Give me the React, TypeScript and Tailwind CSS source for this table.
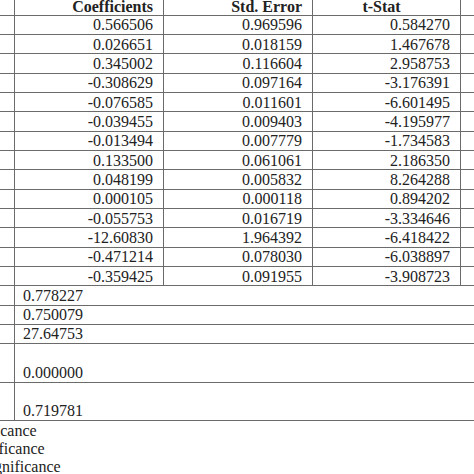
import React from 'react';

const rows = [
  ['0.566506', '0.969596', '0.584270'],
  ['0.026651', '0.018159', '1.467678'],
  ['0.345002', '0.116604', '2.958753'],
  ['-0.308629', '0.097164', '-3.176391'],
  ['-0.076585', '0.011601', '-6.601495'],
  ['-0.039455', '0.009403', '-4.195977'],
  ['-0.013494', '0.007779', '-1.734583'],
  ['0.133500', '0.061061', '2.186350'],
  ['0.048199', '0.005832', '8.264288'],
  ['0.000105', '0.000118', '0.894202'],
  ['-0.055753', '0.016719', '-3.334646'],
  ['-12.60830', '1.964392', '-6.418422'],
  ['-0.471214', '0.078030', '-6.038897'],
  ['-0.359425', '0.091955', '-3.908723'],
];

const stats = [
  { val: '0.778227', tall: false },
  { val: '0.750079', tall: false },
  { val: '27.64753', tall: false },
  { val: '0.000000', tall: true },
  { val: '0.719781', tall: true },
];

const txt = "font-['Liberation_Serif','Times_New_Roman',serif] text-[16px] leading-[17px] text-[#222]";
const cell = `border border-[#6b6b6b] p-0 ${txt}`;

export default function App() {
  return (
    <div className={`w-[474px] h-[474px] overflow-hidden bg-white ${txt}`}>
      <div className="w-[700px] -ml-[106px] -mt-[4.6px]">
        <table className={`table-fixed border-collapse w-[666px] ${txt}`}>
          <tbody>
            <tr className="h-[19.33px]">
              <td className={`${cell} w-[120px]`}></td>
              <td className={`${cell} w-[149px] font-bold text-right pr-[10px] pt-[1px]`}>Coefficients</td>
              <td className={`${cell} w-[149px] font-bold text-right pr-[10px] pt-[1px]`}>Std. Error</td>
              <td className={`${cell} w-[148px] font-bold text-center pr-[10px] pt-[1px]`}>t-Stat</td>
              <td className={`${cell} w-[100px]`}></td>
            </tr>
            {rows.map((r, i) => (
              <tr key={i} className="h-[19.33px]">
                <td className={cell}></td>
                {r.map((v, j) => (
                  <td key={j} className={`${cell} text-right pr-[10px]`}>{v}</td>
                ))}
                <td className={cell}></td>
              </tr>
            ))}
            {stats.map((s, i) => (
              <tr key={i} className={s.tall ? 'h-[38.5px]' : 'h-[19.33px]'}>
                <td className={cell}></td>
                <td colSpan={4} className={`${cell} pl-[8px] text-left align-bottom pb-[1px]`}>{s.val}</td>
              </tr>
            ))}
          </tbody>
        </table>
        <div className="leading-[18px] pt-[1px] pl-[20px]">
          <div>* 10% significance</div>
          <div className="pl-[8px]">** 5% significance</div>
          <div className="pl-[16px]">*** 1% significance</div>
        </div>
      </div>
    </div>
  );
}
